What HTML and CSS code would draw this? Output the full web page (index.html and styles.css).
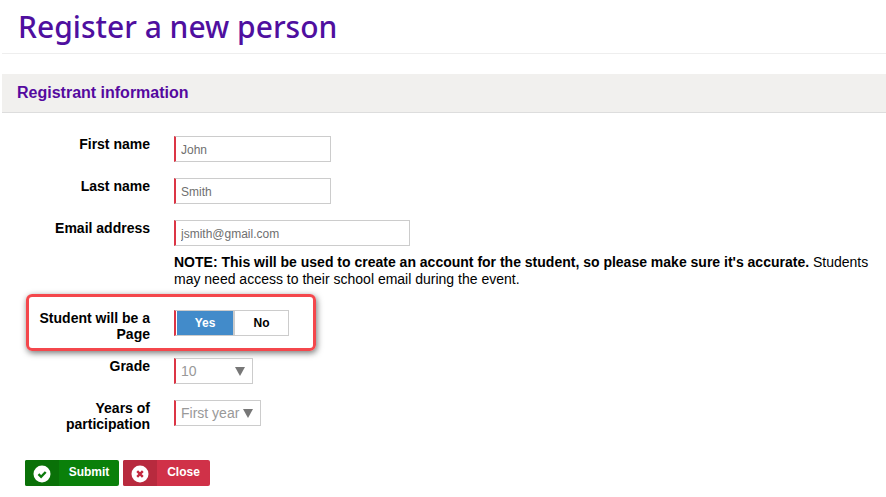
FILE: index.html
```html
<!DOCTYPE html>
<html lang="en">
<head>
  <meta charset="UTF-8" />
  <title>Register a new person</title>
  <link rel="stylesheet" href="styles.css">
</head>
<body>

<header class="page-head">
  <h1>Register a new person</h1>
</header>

<main class="page">
  <h2 class="section-title">Registrant information</h2>

  <form class="reg-form">
    <div class="row">
      <label>First name</label>
      <div class="field"><input class="text-input short" type="text" placeholder="John"></div>
    </div>
    <div class="row">
      <label>Last name</label>
      <div class="field"><input class="text-input short" type="text" placeholder="Smith"></div>
    </div>
    <div class="row row-note">
      <label>Email address</label>
      <div class="field">
        <input class="text-input long" type="text" placeholder="jsmith@gmail.com">
        <p class="note"><b>NOTE: This will be used to create an account for the student, so please make sure it's accurate.</b> Students may need access to their school email during the event.</p>
      </div>
    </div>
    <div class="row row-page">
      <label>Student will be a Page</label>
      <div class="field">
        <div class="toggle">
          <span class="toggle-opt on">Yes</span>
          <span class="toggle-opt">No</span>
        </div>
      </div>
      <div class="callout"></div>
    </div>
    <div class="row row-grade">
      <label>Grade</label>
      <div class="field">
        <div class="select grade"><span>10</span><i class="arrow"></i></div>
      </div>
    </div>
    <div class="row">
      <label>Years of participation</label>
      <div class="field">
        <div class="select years"><span>First year</span><i class="arrow"></i></div>
      </div>
    </div>

    <div class="actions">
      <button type="button" class="btn btn-submit">
        <span class="btn-icon">
          <svg width="18" height="18" viewBox="0 0 18 18"><circle cx="9" cy="9" r="8.5" fill="#fff"/><path d="M5.5 9.2l2.6 2.6 4.6-4.8" fill="none" stroke="#0b7a0b" stroke-width="2.4"/></svg>
        </span>
        <span class="btn-text">Submit</span>
      </button>
      <button type="button" class="btn btn-close">
        <span class="btn-icon">
          <svg width="18" height="18" viewBox="0 0 18 18"><circle cx="9" cy="9" r="8.5" fill="#fff"/><path d="M6.2 6.2l5.6 5.6M11.8 6.2l-5.6 5.6" fill="none" stroke="#c4283f" stroke-width="2.4"/></svg>
        </span>
        <span class="btn-text">Close</span>
      </button>
    </div>
  </form>
</main>

</body>
</html>
```

FILE: styles.css
```css
* {
  box-sizing: border-box;
  margin: 0;
  padding: 0;
}

html, body {
  background: #fff;
  color: #000;
  font-family: "Liberation Sans", Arial, sans-serif;
  font-size: 14px;
  overflow: hidden;
}

.page-head {
  height: 54px;
  margin-left: 2px;
  padding: 6px 0 0 16px;
  border-bottom: 1px solid #eee;
}

.page-head h1 {
  font-family: "Noto Sans", "Open Sans", sans-serif;
  font-size: 30px;
  font-weight: 500;
  line-height: 42px;
  color: #4f0f9f;
}

.page {
  margin-left: 2px;
  padding-top: 20px;
}

.section-title {
  height: 39px;
  padding-left: 15px;
  background: #f1f0ee;
  border-bottom: 1px solid #ddd;
  font-size: 16px;
  font-weight: bold;
  line-height: 37px;
  color: #55099f;
}

.reg-form {
  padding-top: 23px;
}

.row {
  position: relative;
  display: grid;
  grid-template-columns: 148px 1fr;
  column-gap: 24px;
  margin-bottom: 16px;
}

.row label {
  margin-left: 30px;
  font-weight: bold;
  line-height: 16px;
  text-align: right;
}

.row-note {
  margin-bottom: 22px;
}

.row-page {
  margin-bottom: 16px;
}

.field {
  min-width: 0;
}

.text-input {
  display: block;
  height: 26px;
  padding: 2px 0 0 5px;
  background: #fff;
  border: 1px solid #ccc;
  border-left: 2px solid #dc3545;
  font-family: inherit;
  font-size: 12px;
  outline: none;
}

.text-input::placeholder {
  color: #6f6f6f;
  opacity: 1;
}

.short {
  width: 157px;
}

.long {
  width: 236px;
}

.note {
  margin-top: 8px;
  padding-right: 14px;
  line-height: 17px;
}

.toggle {
  display: flex;
  width: 115px;
  height: 26px;
  border: 1px solid #ccc;
  border-left: 2px solid #dc3545;
  background: #fff;
  font-size: 12px;
  font-weight: bold;
}

.toggle-opt {
  flex: 1;
  line-height: 24px;
  text-align: center;
}

.toggle-opt.on {
  flex: 0 0 58px;
  margin-left: 1px;
  background: #428bca;
  border-right: 2px solid #ccc;
  color: #fff;
}

.callout {
  position: absolute;
  left: 24px;
  top: -16px;
  width: 290px;
  height: 57px;
  border: 3px solid #f4474c;
  border-radius: 6px;
  box-shadow: 1px 2px 6px rgba(0, 0, 0, 0.55);
  pointer-events: none;
}

.select {
  display: flex;
  align-items: center;
  justify-content: space-between;
  height: 26px;
  border: 1px solid #ccc;
  border-left: 2px solid #dc3545;
  color: #999;
  font-size: 14px;
}

.select.grade {
  width: 79px;
  padding: 0 7px 0 5px;
}

.select.years {
  width: 87px;
  padding: 0 7px 0 5px;
  white-space: nowrap;
}

.arrow {
  width: 0;
  height: 0;
  border-left: 5.5px solid transparent;
  border-right: 5.5px solid transparent;
  border-top: 9px solid #777;
}

.actions {
  display: flex;
  gap: 4px;
  margin: 28px 0 0 23px;
}

.btn {
  display: flex;
  align-items: stretch;
  height: 26px;
  border: 0;
  border-radius: 2px;
  overflow: hidden;
  color: #fff;
  font-family: inherit;
  font-size: 12px;
  font-weight: bold;
}

.btn-icon {
  display: flex;
  align-items: center;
  justify-content: center;
  padding-top: 2px;
}

.btn-text {
  flex: 1;
  padding-top: 5px;
  text-align: center;
}

.btn-submit {
  width: 94px;
  background: #0a800a;
}

.btn-submit .btn-icon {
  width: 34px;
  background: #0a7108;
}

.btn-close {
  width: 87px;
  background: #d03148;
}

.btn-close .btn-icon {
  width: 34px;
  background: #b82a3e;
}
```
